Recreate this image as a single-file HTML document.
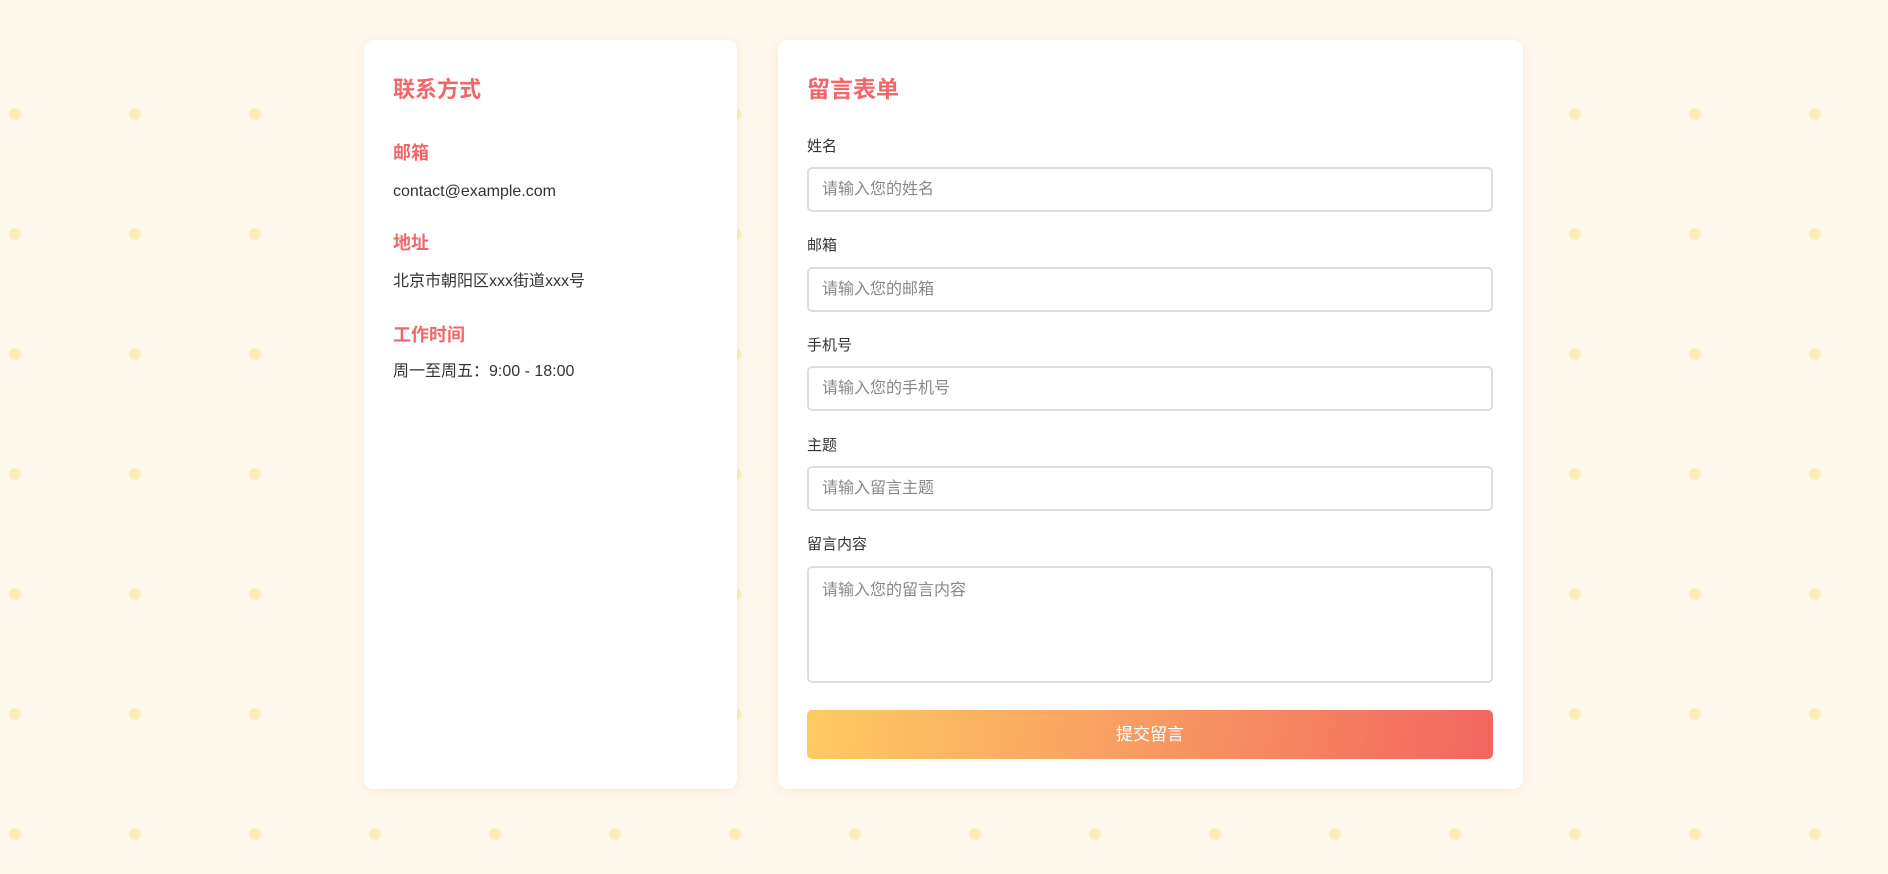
<!DOCTYPE html>
<html><head><meta charset="utf-8"><style>
*{box-sizing:border-box;margin:0;padding:0}
body{width:1888px;height:874px;overflow:hidden;background-color:#fff8ec;background-image:radial-gradient(circle at 15px 114px,#fdecbb 0 5.5px,transparent 6.5px);background-size:120px 120px;background-position:0 0;font-family:"Liberation Sans","Noto Sans CJK SC",sans-serif;position:relative}
.card{position:absolute;background:#fff;border-radius:10px;box-shadow:0 2px 10px rgba(200,170,120,0.18)}
.t{position:absolute;white-space:nowrap;line-height:1}
.h{color:#f0676a;font-weight:bold}
.lab{color:#333;font-size:15px}
.in{position:absolute;left:29px;width:686px;height:45px;border:2px solid #ddd;border-radius:5px;color:#888;font-size:16px;padding:13px 13px;line-height:1}
</style></head><body>
<div class="card" style="left:364px;top:40px;width:373px;height:749px">
<div class="t h" style="left:29px;top:39px;font-size:22px">联系方式</div>
<div class="t h" style="left:29px;top:104px;font-size:18px">邮箱</div>
<div class="t" style="left:29px;top:144px;font-size:16px;color:#333">contact@example.com</div>
<div class="t h" style="left:29px;top:194px;font-size:18px">地址</div>
<div class="t" style="left:29px;top:234px;font-size:16px;color:#333">北京市朝阳区xxx街道xxx号</div>
<div class="t h" style="left:29px;top:286px;font-size:18px">工作时间</div>
<div class="t" style="left:29px;top:324px;font-size:16px;color:#333">周一至周五：9:00 - 18:00</div>
</div>
<div class="card" style="left:778px;top:40px;width:745px;height:749px">
<div class="t h" style="left:29px;top:38px;font-size:23px">留言表单</div>
<div class="t lab" style="left:29px;top:99px">姓名</div>
<div class="in" style="top:127px">请输入您的姓名</div>
<div class="t lab" style="left:29px;top:198px">邮箱</div>
<div class="in" style="top:227px">请输入您的邮箱</div>
<div class="t lab" style="left:29px;top:298px">手机号</div>
<div class="in" style="top:326px">请输入您的手机号</div>
<div class="t lab" style="left:29px;top:398px">主题</div>
<div class="in" style="top:426px">请输入留言主题</div>
<div class="t lab" style="left:29px;top:497px">留言内容</div>
<div class="in" style="top:526px;height:117px;padding-top:15px">请输入您的留言内容</div>
<div style="position:absolute;left:29px;top:670px;width:686px;height:49px;border-radius:5px;background:linear-gradient(100deg,#fecb62,#f9a463 40%,#f26560);color:#fff;font-size:17px;text-align:center;line-height:49px">提交留言</div>
</div>
</body></html>
